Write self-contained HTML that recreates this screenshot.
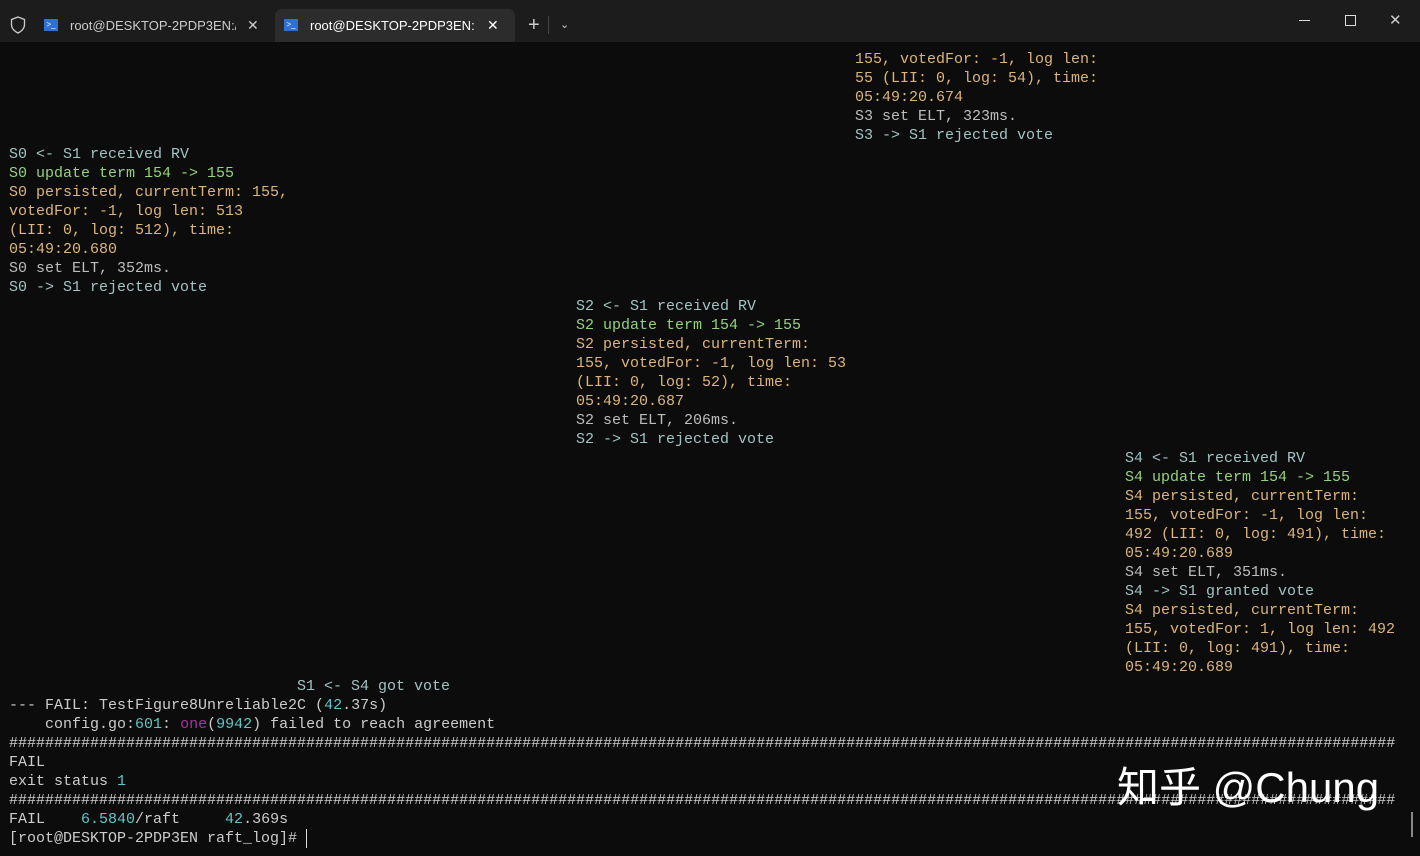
<!DOCTYPE html>
<html><head><meta charset="utf-8"><style>
body{margin:0;width:1420px;height:856px;background:#0c0c0c;overflow:hidden;position:relative;font-family:"Liberation Sans",sans-serif}
#tb{position:absolute;left:0;top:0;width:1420px;height:42px;background:#1c1c1c}
.tab{position:absolute;top:9px;height:33px;color:#ccc;font-size:13px;line-height:33px}
.act{background:#2c2c2c;border-radius:7px 7px 0 0;color:#fff}
.tt{position:absolute;top:0;overflow:hidden;white-space:nowrap}
.x{position:absolute;top:0;font-size:14px}
.l{position:absolute;font-family:"Liberation Mono",monospace;font-size:15px;line-height:19px;white-space:pre;height:19px}
.c{color:#a3c4c4}.g{color:#95d27c}.o{color:#dcb57a}.d{color:#bdbdbd}.w{color:#cccccc}.t{color:#5fc7c7}.m{color:#b0309f}
.ps{position:absolute;top:10px;width:14px;height:12px;background:#2f6fd6;color:#fff;font-size:8px;line-height:12px;text-align:center}
</style></head><body>
<div id="tb">
<svg style="position:absolute;left:10px;top:16px" width="16" height="18" viewBox="0 0 16 18"><path d="M8 1 L14.5 3.5 V8.5 C14.5 13 11 15.5 8 17 C5 15.5 1.5 13 1.5 8.5 V3.5 Z" fill="none" stroke="#ccc" stroke-width="1.3"/></svg>
<div class="tab" style="left:44px;width:226px"><span class="ps" style="left:0">&gt;_</span><span class="tt" style="left:26px;width:166px">root@DESKTOP-2PDP3EN:/mnt</span><span class="x" style="left:203px">✕</span></div>
<div class="tab act" style="left:275px;width:240px"><span class="ps" style="left:9px">&gt;_</span><span class="tt" style="left:35px;width:164px">root@DESKTOP-2PDP3EN:/mnt</span><span class="x" style="left:212px">✕</span></div>
<div class="tab" style="left:528px;font-size:20px;font-weight:300">+</div>
<div style="position:absolute;left:548px;top:16px;width:1px;height:18px;background:#444"></div>
<div class="tab" style="left:560px;font-size:11px">&#8964;</div>
<div style="position:absolute;left:1299px;top:20px;width:11px;height:1px;background:#ddd"></div>
<div style="position:absolute;left:1345px;top:15px;width:9px;height:9px;border:1px solid #ddd"></div>
<div class="tab" style="left:1389px;font-size:15px;top:4px">✕</div>
</div>

<div class="l o" style="top:50px;left:855px">155, votedFor: -1, log len:</div>
<div class="l o" style="top:69px;left:855px">55 (LII: 0, log: 54), time:</div>
<div class="l o" style="top:88px;left:855px">05:49:20.674</div>
<div class="l d" style="top:107px;left:855px">S3 set ELT, 323ms.</div>
<div class="l c" style="top:126px;left:855px">S3 -&gt; S1 rejected vote</div>

<div class="l c" style="top:145px;left:9px">S0 &lt;- S1 received RV</div>
<div class="l g" style="top:164px;left:9px">S0 update term 154 -&gt; 155</div>
<div class="l o" style="top:183px;left:9px">S0 persisted, currentTerm: 155,</div>
<div class="l o" style="top:202px;left:9px">votedFor: -1, log len: 513</div>
<div class="l o" style="top:221px;left:9px">(LII: 0, log: 512), time:</div>
<div class="l o" style="top:240px;left:9px">05:49:20.680</div>
<div class="l d" style="top:259px;left:9px">S0 set ELT, 352ms.</div>
<div class="l c" style="top:278px;left:9px">S0 -&gt; S1 rejected vote</div>

<div class="l c" style="top:297px;left:576px">S2 &lt;- S1 received RV</div>
<div class="l g" style="top:316px;left:576px">S2 update term 154 -&gt; 155</div>
<div class="l o" style="top:335px;left:576px">S2 persisted, currentTerm:</div>
<div class="l o" style="top:354px;left:576px">155, votedFor: -1, log len: 53</div>
<div class="l o" style="top:373px;left:576px">(LII: 0, log: 52), time:</div>
<div class="l o" style="top:392px;left:576px">05:49:20.687</div>
<div class="l d" style="top:411px;left:576px">S2 set ELT, 206ms.</div>
<div class="l c" style="top:430px;left:576px">S2 -&gt; S1 rejected vote</div>

<div class="l c" style="top:449px;left:1125px">S4 &lt;- S1 received RV</div>
<div class="l g" style="top:468px;left:1125px">S4 update term 154 -&gt; 155</div>
<div class="l o" style="top:487px;left:1125px">S4 persisted, currentTerm:</div>
<div class="l o" style="top:506px;left:1125px">155, votedFor: -1, log len:</div>
<div class="l o" style="top:525px;left:1125px">492 (LII: 0, log: 491), time:</div>
<div class="l o" style="top:544px;left:1125px">05:49:20.689</div>
<div class="l d" style="top:563px;left:1125px">S4 set ELT, 351ms.</div>
<div class="l c" style="top:582px;left:1125px">S4 -&gt; S1 granted vote</div>
<div class="l o" style="top:601px;left:1125px">S4 persisted, currentTerm:</div>
<div class="l o" style="top:620px;left:1125px">155, votedFor: 1, log len: 492</div>
<div class="l o" style="top:639px;left:1125px">(LII: 0, log: 491), time:</div>
<div class="l o" style="top:658px;left:1125px">05:49:20.689</div>

<div class="l c" style="top:677px;left:297px">S1 &lt;- S4 got vote</div>
<div class="l w" style="top:696px;left:9px">--- FAIL: TestFigure8Unreliable2C (<span class="t">42</span>.37s)</div>
<div class="l w" style="top:715px;left:9px">    config.go:<span class="t">601</span>: <span class="m">one</span>(<span class="t">9942</span>) failed to reach agreement</div>
<div class="l w" style="top:734px;left:9px">##########################################################################################################################################################</div>
<div class="l w" style="top:753px;left:9px">FAIL</div>
<div class="l w" style="top:772px;left:9px">exit status <span class="t">1</span></div>
<div class="l w" style="top:791px;left:9px">##########################################################################################################################################################</div>
<div class="l w" style="top:810px;left:9px">FAIL    <span class="t">6.5840</span>/raft     <span class="t">42</span>.369s</div>
<div class="l w" style="top:829px;left:9px">[root@DESKTOP-2PDP3EN raft_log]# </div>
<div style="position:absolute;left:306px;top:829px;width:1px;height:19px;background:#ddd"></div>

<div style="position:absolute;left:1117px;top:761px;color:#fff;font-size:42px;line-height:54px;font-family:'Liberation Sans','Noto Sans CJK SC',sans-serif;white-space:nowrap">知乎 @Chung</div>
<div style="position:absolute;left:1411px;top:812px;width:2px;height:25px;background:#888"></div>
</body></html>
